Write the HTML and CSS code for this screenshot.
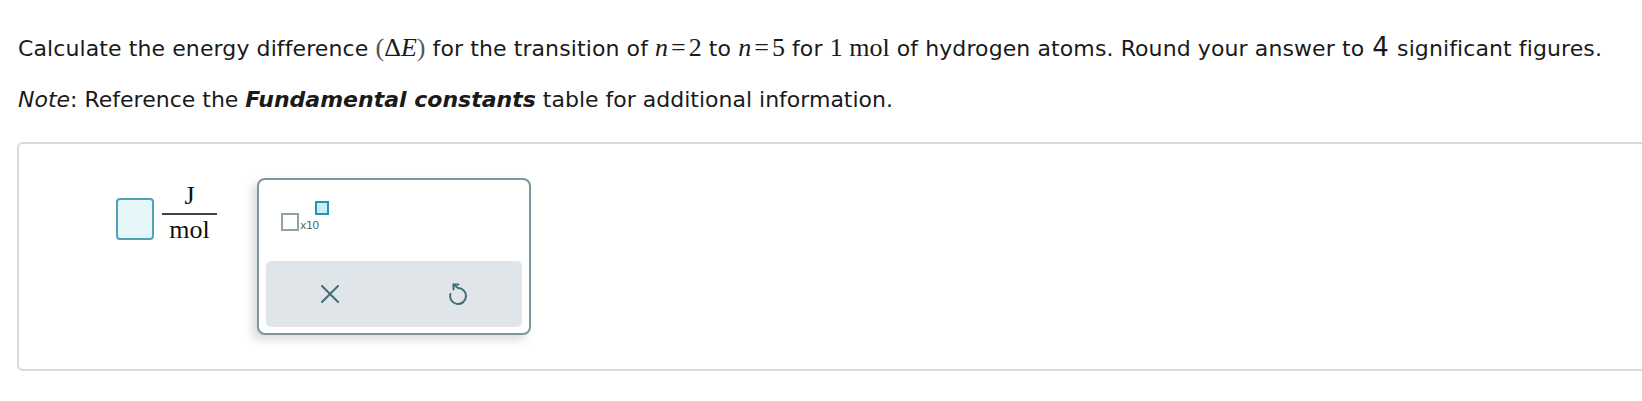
FILE: index.html
```html
<!DOCTYPE html>
<html lang="en">
<head>
<meta charset="utf-8">
<title>Energy difference</title>
<link rel="stylesheet" href="styles.css">
</head>
<body>
<div class="page">
  <p class="question">Calculate the energy difference <span class="math"><span class="paren">(</span>Δ<i>E</i><span class="paren">)</span></span> for the transition of <span class="math"><i>n</i><span class="eq">=</span>2</span> to <span class="math"><i>n</i><span class="eq">=</span>5</span> for <span class="math">1 mol</span> of hydrogen atoms. Round your answer to <span class="num">4</span> significant figures.</p>
  <p class="note"><i>Note</i>: Reference the <b><i>Fundamental constants</i></b> table for additional information.</p>
  <div class="answer-area">
    <div class="answer">
      <div class="input-box"></div>
      <div class="fraction">
        <span class="numer">J</span>
        <span class="denom">mol</span>
      </div>
    </div>
    <div class="palette">
      <div class="sci">
        <span class="sci-box"></span><span class="sci-x">x10</span><span class="sci-exp"></span>
      </div>
      <div class="actions">
        <button class="act" aria-label="Clear">
          <svg width="20" height="20" viewBox="0 0 20 20"><path d="M2 2 L18 18 M18 2 L2 18" stroke="#3f6d77" stroke-width="2" fill="none" stroke-linecap="round"/></svg>
        </button>
        <button class="act" aria-label="Undo">
          <svg width="24" height="24" viewBox="0 0 24 24"><path d="M4.3 11.9 A8 8 0 1 0 12 6 L7.5 2.5" stroke="#3f6d77" stroke-width="2" fill="none" stroke-linecap="round" stroke-linejoin="round"/><path d="M12.5 2.5 L7.5 2.5 L7.5 7.5" stroke="#3f6d77" stroke-width="2" fill="none" stroke-linecap="round" stroke-linejoin="round"/></svg>
        </button>
      </div>
    </div>
  </div>
</div>
</body>
</html>
```

FILE: styles.css
```css
html, body {
  margin: 0;
  padding: 0;
  background: #ffffff;
  overflow: hidden;
}

.page {
  padding: 0 0 0 18px;
  font-family: "DejaVu Sans", Verdana, sans-serif;
  font-size: 22px;
  color: #1a1a1a;
}

.question {
  margin: 0;
  padding-top: 34px;
  line-height: 26px;
  white-space: nowrap;
  letter-spacing: 0.1px;
}

.note {
  margin: 0;
  padding-top: 25px;
  line-height: 26px;
}

.math {
  font-family: "Liberation Serif", "Times New Roman", serif;
  font-size: 26px;
  letter-spacing: 0;
}

.paren {
  color: #555;
}

.eq {
  padding: 0 3px;
}

.num {
  font-size: 26px;
  padding: 0 1px;
}

.answer-area {
  margin-top: 29px;
  margin-left: -1px;
  margin-right: -30px;
  height: 225px;
  border: 2px solid #d3dcdf;
  border-radius: 6px;
  display: flex;
  align-items: flex-start;
  padding-left: 97px;
}

.answer {
  display: flex;
  align-items: flex-start;
  gap: 8px;
}

.input-box {
  width: 34px;
  height: 38px;
  margin-top: 54px;
  border: 2px solid #4fa4b3;
  border-radius: 4px;
  background: #e6f5f8;
}

.fraction {
  display: flex;
  flex-direction: column;
  align-items: center;
  font-family: "Liberation Serif", "Times New Roman", serif;
  font-size: 26px;
  color: #111;
  line-height: 26px;
  width: 55px;
  margin-top: 39px;
}

.numer {
  padding-bottom: 4px;
  border-bottom: 2px solid #444;
  width: 100%;
  text-align: center;
}

.denom {
  padding-top: 2px;
}

.palette {
  margin-left: 40px;
  margin-top: 34px;
  width: 256px;
  height: 147px;
  border: 2px solid #7d959c;
  border-radius: 8px;
  box-shadow: -5px 5px 10px rgba(40, 60, 70, 0.18);
  background: #fff;
  display: flex;
  flex-direction: column;
  padding: 0 7px 6px 7px;
  box-sizing: content-box;
}

.sci {
  height: 81px;
  display: flex;
  align-items: flex-start;
  padding-left: 15px;
}

.sci-box {
  width: 14px;
  height: 14px;
  border: 2px solid #8ea2a8;
  margin-top: 33px;
  background: #fff;
}

.sci-x {
  font-family: "DejaVu Sans", sans-serif;
  font-size: 11px;
  color: #4d6e77;
  margin-top: 39px;
  margin-left: 1px;
  letter-spacing: -0.6px;
}

.sci-exp {
  width: 10px;
  height: 10px;
  border: 2px solid #1b9ab0;
  background: #cbecf2;
  margin-top: 21px;
  margin-left: -4px;
}

.actions {
  flex: 1;
  background: #dfe5e8;
  border-radius: 5px;
  display: flex;
}

.act {
  flex: 1;
  border: 0;
  background: transparent;
  display: flex;
  align-items: center;
  justify-content: center;
  padding: 0;
}
```
